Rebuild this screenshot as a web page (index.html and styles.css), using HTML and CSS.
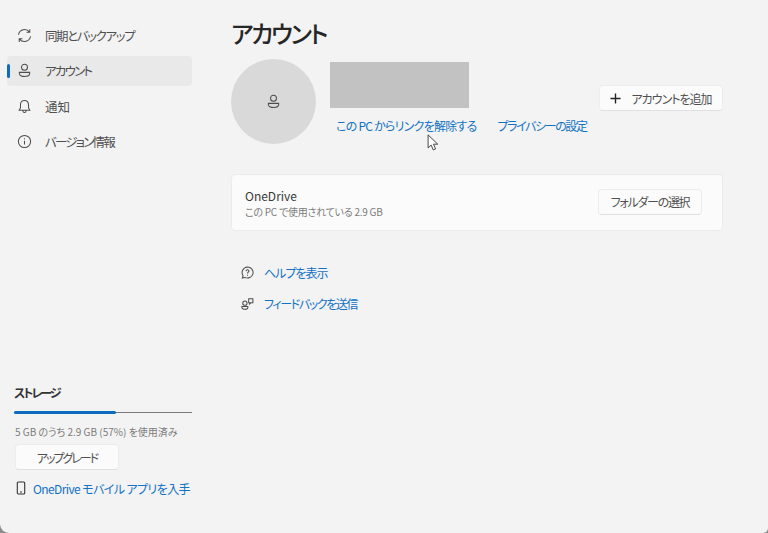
FILE: index.html
```html
<!DOCTYPE html>
<html lang="ja">
<head>
<meta charset="utf-8">
<title>OneDrive アカウント</title>
<link rel="stylesheet" href="styles.css">
</head>
<body>
<div class="app">
  <aside class="sidebar">
    <nav class="nav">
      <div class="nav-item">
        <svg class="nav-icon" viewBox="0 0 16 16"><path d="M1.600 7.200A6.500 6.500 0 0 1 13.200 4.200M14.400 8.800A6.500 6.500 0 0 1 2.800 11.800M13.600 1.200v3.400h-3.400M2.400 14.800v-3.400h3.400"/></svg>
        <span class="track-14">同期とバックアップ</span>
      </div>
      <div class="nav-item selected">
        <svg class="nav-icon" viewBox="0 0 16 16"><circle cx="8" cy="4.500" r="3.200"/><path d="M2.500 10h11v1.300c0 2-2.600 3.200-5.500 3.200s-5.500-1.200-5.500-3.200z"/></svg>
        <span class="track-18">アカウント</span>
      </div>
      <div class="nav-item">
        <svg class="nav-icon" viewBox="0 0 16 16"><path d="M8 1.500c-2.700 0-4.300 2-4.300 4.500v3.500L2.300 12h11.400l-1.400-2.500V6c0-2.500-1.600-4.500-4.300-4.500zM6.200 12.300c.1 1.300.9 2.200 1.800 2.200s1.700-.9 1.800-2.200"/></svg>
        <span>通知</span>
      </div>
      <div class="nav-item">
        <svg class="nav-icon" viewBox="0 0 16 16"><circle cx="8" cy="8" r="6.500"/><path d="M8 7.300v4M8 4.500v1.200"/></svg>
        <span class="track-18">バージョン情報</span>
      </div>
    </nav>
    <section class="storage">
      <h2 class="storage-title">ストレージ</h2>
      <div class="meter"><div class="meter-fill"></div></div>
      <p class="storage-text">5 GB のうち 2.9 GB (57%) を使用済み</p>
      <button class="btn upgrade"><span class="track-20">アップグレード</span></button>
      <div class="mobile">
        <svg class="mobile-icon" viewBox="0 0 10 14"><rect x="1.300" y="1" width="7.400" height="12" rx="1"/><path d="M4 11h2"/></svg>
        <a class="link mobile-link">OneDrive モバイル アプリを入手</a>
      </div>
    </section>
  </aside>
  <main class="main">
    <h1 class="title">アカウント</h1>
    <div class="account">
      <div class="avatar">
        <svg class="avatar-icon" viewBox="0 0 16 16"><circle cx="8" cy="4.500" r="3.200"/><path d="M2.500 10h11v1.300c0 2-2.600 3.200-5.500 3.200s-5.500-1.200-5.500-3.200z"/></svg>
      </div>
      <div class="identity">
        <div class="redacted"></div>
        <div class="links">
          <a class="link track-08">この PC からリンクを解除する</a>
          <a class="link track-14">プライバシーの設定</a>
        </div>
      </div>
      <button class="btn add">
        <svg class="plus" viewBox="0 0 12 12"><path d="M6 .5v11M.5 6h11"/></svg>
        <span class="track-10">アカウントを追加</span>
      </button>
    </div>
    <section class="card">
      <div class="card-text">
        <div class="card-name">OneDrive</div>
        <div class="card-sub">この PC で使用されている 2.9 GB</div>
      </div>
      <button class="btn folder"><span class="track-12">フォルダーの選択</span></button>
    </section>
    <div class="help">
      <div class="help-row">
        <svg class="help-icon" viewBox="0 0 14 14"><path d="M7 1a6 6 0 1 1-2.800 11.300L1.500 13l.7-2.700A6 6 0 0 1 7 1z"/><path d="M5.400 5.500C5.500 3.500 8.600 3.500 8.600 5.400c0 1.200-1.600 1.300-1.600 2.600M7 9.400v1"/></svg>
        <a class="link track-10">ヘルプを表示</a>
      </div>
      <div class="help-row">
        <svg class="help-icon" viewBox="0 0 14 14"><circle cx="4.200" cy="6.600" r="2.300"/><path d="M1 10.200h6.400v1c0 1.200-1.400 1.900-3.200 1.900S1 12.400 1 11.200z"/><path d="M8.300 2h4.500v4.300H10.600L9.300 7.500V6.300H8.300z"/></svg>
        <a class="link track-14">フィードバックを送信</a>
      </div>
    </div>
  </main>
  <svg class="cursor" viewBox="0 0 14 20"><path d="M1 1v14.500l3.400-3.200 2.300 5.400 2.600-1.100-2.300-5.300h4.700z"/></svg>
</div>
</body>
</html>
```
FILE: styles.css
```css
* { box-sizing: border-box; }
html, body { margin: 0; height: 100%; }
body {
  background: #8c8c8c;
  font-family: "Noto Sans CJK JP", "Noto Sans", sans-serif;
  font-feature-settings: "palt";
  color: #3a3a3a;
  overflow: hidden;
}
.track-08 { letter-spacing: -0.75px; }
.track-10 { letter-spacing: -1px; }
.track-12 { letter-spacing: -1.3px; }
.track-14 { letter-spacing: -1.4px; }
.track-18 { letter-spacing: -1.8px; }
.track-20 { letter-spacing: -2px; }
.app {
  position: relative;
  display: flex;
  width: 768px;
  height: 533px;
  background: #f3f3f3;
  border-radius: 0 0 5px 9px;
  overflow: hidden;
}
.sidebar {
  width: 200px;
  flex: none;
  padding: 20px 8px 0 7px;
  display: flex;
  flex-direction: column;
  justify-content: space-between;
}
.nav { display: flex; flex-direction: column; gap: 5.5px; }
.nav-item {
  position: relative;
  display: flex;
  align-items: center;
  gap: 13px;
  height: 30px;
  padding-left: 10px;
  border-radius: 4px;
  font-size: 12.5px;
  color: #505050;
}
.selected { background: #e9e9e9; }
.selected::before {
  content: "";
  position: absolute;
  left: 0;
  top: 8px;
  width: 3px;
  height: 14px;
  border-radius: 2px;
  background: #0f6cbd;
}
.nav-icon, .avatar-icon, .help-icon, .mobile-icon {
  fill: none;
  stroke: #4d4d4d;
  stroke-width: 1.1;
  flex: none;
}
.nav-icon { width: 15px; height: 15px; }
.storage { padding: 0 0 36px 7px; }
.storage-title {
  margin: 0 0 9px;
  font-size: 12px;
  line-height: 18px;
  font-weight: 700;
  letter-spacing: -2px;
  color: #333;
}
.meter {
  position: relative;
  width: 178px;
  height: 3px;
  margin-bottom: 10px;
}
.meter::before {
  content: "";
  position: absolute;
  left: 0;
  right: 0;
  top: 1px;
  height: 1px;
  background: #7a7a7a;
}
.meter-fill {
  position: relative;
  width: 102px;
  height: 3px;
  border-radius: 2px;
  background: #0f6cbd;
}
.storage-text {
  margin: 0 0 4px 1px;
  font-size: 10px;
  line-height: 16px;
  color: #7b7b7b;
  white-space: nowrap;
}
.btn {
  display: flex;
  align-items: center;
  justify-content: center;
  height: 26px;
  padding: 0;
  background: #fbfbfb;
  border: 1px solid #ececec;
  border-bottom-color: #e0e0e0;
  border-radius: 4px;
  font: inherit;
  font-size: 12px;
  color: #505050;
}
.upgrade { width: 104px; margin-left: 1px; }
.mobile {
  display: flex;
  align-items: center;
  gap: 7px;
  margin-top: 9px;
  height: 18px;
  padding-left: 2px;
}
.mobile-icon { width: 10px; height: 14px; stroke: #333; }
.link { color: #1272c4; font-size: 12px; white-space: nowrap; }
.mobile-link { letter-spacing: -0.6px; }
.main { flex: 1; min-width: 0; padding: 17px 45px 0 31px; }
.title {
  margin: 0;
  font-size: 24px;
  line-height: 32px;
  font-weight: 500;
  letter-spacing: -2.2px;
  color: #262626;
}
.account { display: flex; margin-top: 10px; height: 85px; }
.avatar {
  width: 85px;
  height: 85px;
  flex: none;
  display: flex;
  align-items: center;
  justify-content: center;
  border-radius: 50%;
  background: #d9d9d9;
}
.avatar-icon { width: 15px; height: 15px; }
.identity { margin-left: 14px; padding-top: 3px; }
.redacted { width: 139px; height: 46px; background: #c2c2c2; }
.links {
  display: flex;
  gap: 21px;
  padding-left: 6px;
  margin-top: 9px;
  line-height: 18px;
}
.add {
  gap: 10px;
  width: 124px;
  margin: 26px 0 0 auto;
}
.plus { width: 11px; height: 11px; fill: none; stroke: #222; stroke-width: 1.5; }
.card {
  display: flex;
  align-items: center;
  justify-content: space-between;
  height: 57px;
  margin-top: 30px;
  padding: 0 20px 0 13px;
  background: #fbfbfb;
  border: 1px solid #ebebeb;
  border-radius: 4px;
}
.card-text { margin-top: 2px; }
.card-name { font-size: 12px; line-height: 16px; color: #3a3a3a; }
.card-sub { font-size: 10px; line-height: 15px; letter-spacing: -0.25px; color: #7b7b7b; }
.folder { width: 104px; margin-bottom: 2px; }
.help {
  display: flex;
  flex-direction: column;
  gap: 13px;
  margin-top: 32px;
  padding-left: 10px;
}
.help-row { display: flex; align-items: center; gap: 10px; height: 18px; }
.help-icon { width: 13px; height: 13px; }
.cursor {
  position: absolute;
  left: 427px;
  top: 134px;
  width: 13px;
  height: 18px;
  fill: #fff;
  stroke: #333;
  stroke-width: 1;
}
```
